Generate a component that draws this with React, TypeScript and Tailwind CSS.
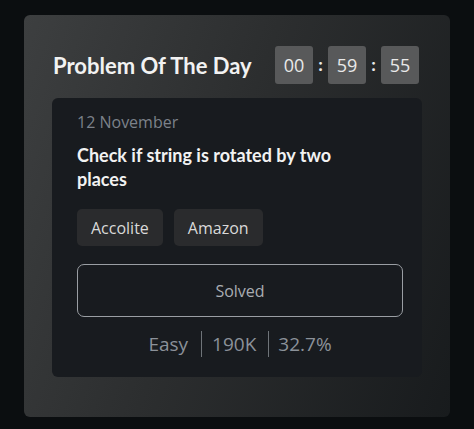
export default function App() {
  const tags = ['Accolite', 'Amazon']

  return (
    <div className="w-[474px] h-[429px] bg-[#0b0e10] pt-[15px] pl-[24px] overflow-hidden" style={{ fontFamily: '"Open Sans", sans-serif' }}>
      <div className="w-[426px] h-[402px] rounded-[6px] bg-[linear-gradient(110deg,#3d3f40_0%,#2c2e2f_45%,#181b1d_100%)] px-[28px] pt-[31px]">
        <div className="flex items-center justify-between h-[38px]">
          <h1 className="pl-[1px] text-[22px] font-bold text-[#f2f2f2]" style={{ fontFamily: '"Lato", sans-serif' }}>
            Problem Of The Day
          </h1>
          <div className="flex items-center mr-[3px] text-[#e9e9e9]">
            <span className="w-[38px] h-[38px] rounded-[3px] bg-[#58595a] flex items-center justify-center text-[18px]">00</span>
            <span className="w-[15px] text-center text-[16px] font-bold">:</span>
            <span className="w-[38px] h-[38px] rounded-[3px] bg-[#58595a] flex items-center justify-center text-[18px]">59</span>
            <span className="w-[15px] text-center text-[16px] font-bold">:</span>
            <span className="w-[38px] h-[38px] rounded-[3px] bg-[#58595a] flex items-center justify-center text-[18px]">55</span>
          </div>
        </div>

        <div className="mt-[14px] h-[279px] rounded-[6px] bg-[#181b1f] pl-[25px] pt-[12px]">
          <p className="text-[16px] leading-[24px] text-[#7c828a]">12 November</p>
          <h2 className="mt-[9px] w-[300px] text-[18px] leading-[24px] font-bold text-[#f2f2f2]" style={{ fontFamily: '"Lato", sans-serif' }}>
            Check if string is rotated by two places
          </h2>
          <div className="mt-[18px] flex gap-[11px]">
            {tags.map(tag => (
              <span key={tag} className="h-[37px] px-[14px] rounded-[5px] bg-[#2a2b2d] flex items-center text-[16px] text-[#d9d9d9]">
                {tag}
              </span>
            ))}
          </div>
          <button className="mt-[18px] w-[326px] h-[53px] rounded-[7px] border border-[#9a9ea3] text-[16px] text-[#a9adb2]">
            Solved
          </button>
          <div className="mt-[13px] w-[326px] flex items-center justify-center text-[19px] text-[#8b9199]">
            <span className="pr-[13px]">Easy</span>
            <span className="w-px h-[26px] bg-[#6f7479]" />
            <span className="pl-[10px] pr-[12px]">190K</span>
            <span className="w-px h-[26px] bg-[#6f7479]" />
            <span className="pl-[9px]">32.7%</span>
          </div>
        </div>
      </div>
    </div>
  )
}
